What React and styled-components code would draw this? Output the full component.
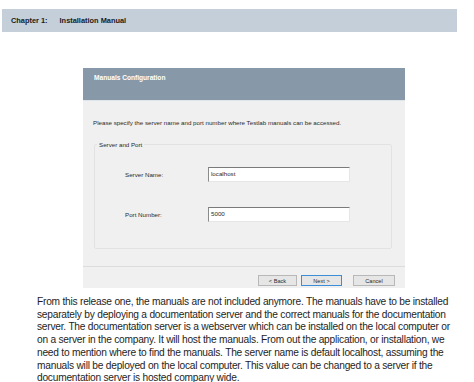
import React from 'react'
import styled, { createGlobalStyle } from 'styled-components'

const Global = createGlobalStyle`
  html, body { margin: 0; padding: 0; background: #fff; }
  body { font-family: "Liberation Sans", Arial, sans-serif; width: 474px; height: 382px; overflow: hidden; }
`

const Page = styled.div`
  padding: 9px 17px 0 2px;
`

const ChapterBar = styled.div`
  height: 23px;
  background: #c4cfd9;
  display: flex;
  align-items: center;
  padding-left: 9px;
  font-size: 7.4px;
  font-weight: bold;
  color: #1a1a1a;
  gap: 12px;
`

const Dialog = styled.div`
  margin: 36px 0 0 81px;
  width: 322px;
  height: 220px;
  background: #f0f0f0;
  display: flex;
  flex-direction: column;
  font-size: 6.2px;
  color: #2a2a2a;
`

const TitleBar = styled.div`
  height: 33px;
  background: #8799a8;
  color: #fff;
  font-weight: bold;
  font-size: 6.6px;
  padding: 6px 0 0 11px;
  box-sizing: border-box;
  border-bottom: 1px solid #dfe4e8;
`

const Intro = styled.div`
  margin: 18px 0 0 10px;
`

const Group = styled.fieldset`
  margin: 15px 13px 0 11px;
  border: 1px solid #e2e2e2;
  border-radius: 2px;
  padding: 0;
  height: 108px;
  box-sizing: border-box;
  display: flex;
  flex-direction: column;
  gap: 25px;
  padding-top: 19px;
`

const Legend = styled.legend`
  padding: 0 2px;
  margin-left: 2px;
`

const Row = styled.div`
  display: flex;
  align-items: center;
`

const Label = styled.div`
  padding-left: 30px;
  width: 83px;
`

const Input = styled.div`
  width: 142px;
  height: 15px;
  box-sizing: border-box;
  background: #fff;
  border-top: 1px solid #7a7a7a;
  border-left: 1px solid #8a8a8a;
  border-right: 1px solid #e6e6e6;
  border-bottom: 1px solid #e6e6e6;
  padding: 2px 0 0 2px;
  font-size: 6.2px;
`

const Separator = styled.div`
  margin: 17px 0 0 0;
  height: 1px;
  background: #dcdcdc;
`

const Buttons = styled.div`
  display: flex;
  justify-content: flex-end;
  margin: 8px 10px 0 0;
  gap: 4px;
`

const Button = styled.div`
  width: ${p => p.$w}px;
  height: 11px;
  box-sizing: border-box;
  border: 1px solid ${p => (p.$primary ? '#3c8fd6' : '#b8b8b8')};
  background: #e6e6e6;
  display: flex;
  align-items: center;
  justify-content: center;
  font-size: 5.6px;
  margin-left: ${p => p.$gap || 0}px;
`

const Paragraph = styled.div`
  margin: 8px 0 0 35px;
  font-size: 10.2px;
  letter-spacing: -0.23px;
  line-height: 12.7px;
  color: #1e1e1e;
`

const Line = styled.div`
  white-space: nowrap;
`

const lines = [
  'From this release one, the manuals are not included anymore. The manuals have to be installed',
  'separately by deploying a documentation server and the correct manuals for the documentation',
  'server. The documentation server is a webserver which can be installed on the local computer or',
  'on a server in the company. It will host the manuals. From out the application, or installation, we',
  'need to mention where to find the manuals. The server name is default localhost, assuming the',
  'manuals will be deployed on the local computer. This value can be changed to a server if the',
  'documentation server is hosted company wide.',
]

export default function App() {
  return (
    <Page>
      <Global />
      <ChapterBar>
        <span>Chapter 1:</span>
        <span>Installation Manual</span>
      </ChapterBar>
      <Dialog>
        <TitleBar>Manuals Configuration</TitleBar>
        <Intro>Please specify the server name and port number where Testlab manuals can be accessed.</Intro>
        <Group>
          <Legend>Server and Port</Legend>
          <Row>
            <Label>Server Name:</Label>
            <Input>localhost</Input>
          </Row>
          <Row>
            <Label>Port Number:</Label>
            <Input>5000</Input>
          </Row>
        </Group>
        <Separator />
        <Buttons>
          <Button $w={39}>&lt; Back</Button>
          <Button $w={41} $primary>Next &gt;</Button>
          <Button $w={42} $gap={7}>Cancel</Button>
        </Buttons>
      </Dialog>
      <Paragraph>
        {lines.map((l, i) => (
          <Line key={i}>{l}</Line>
        ))}
      </Paragraph>
    </Page>
  )
}
